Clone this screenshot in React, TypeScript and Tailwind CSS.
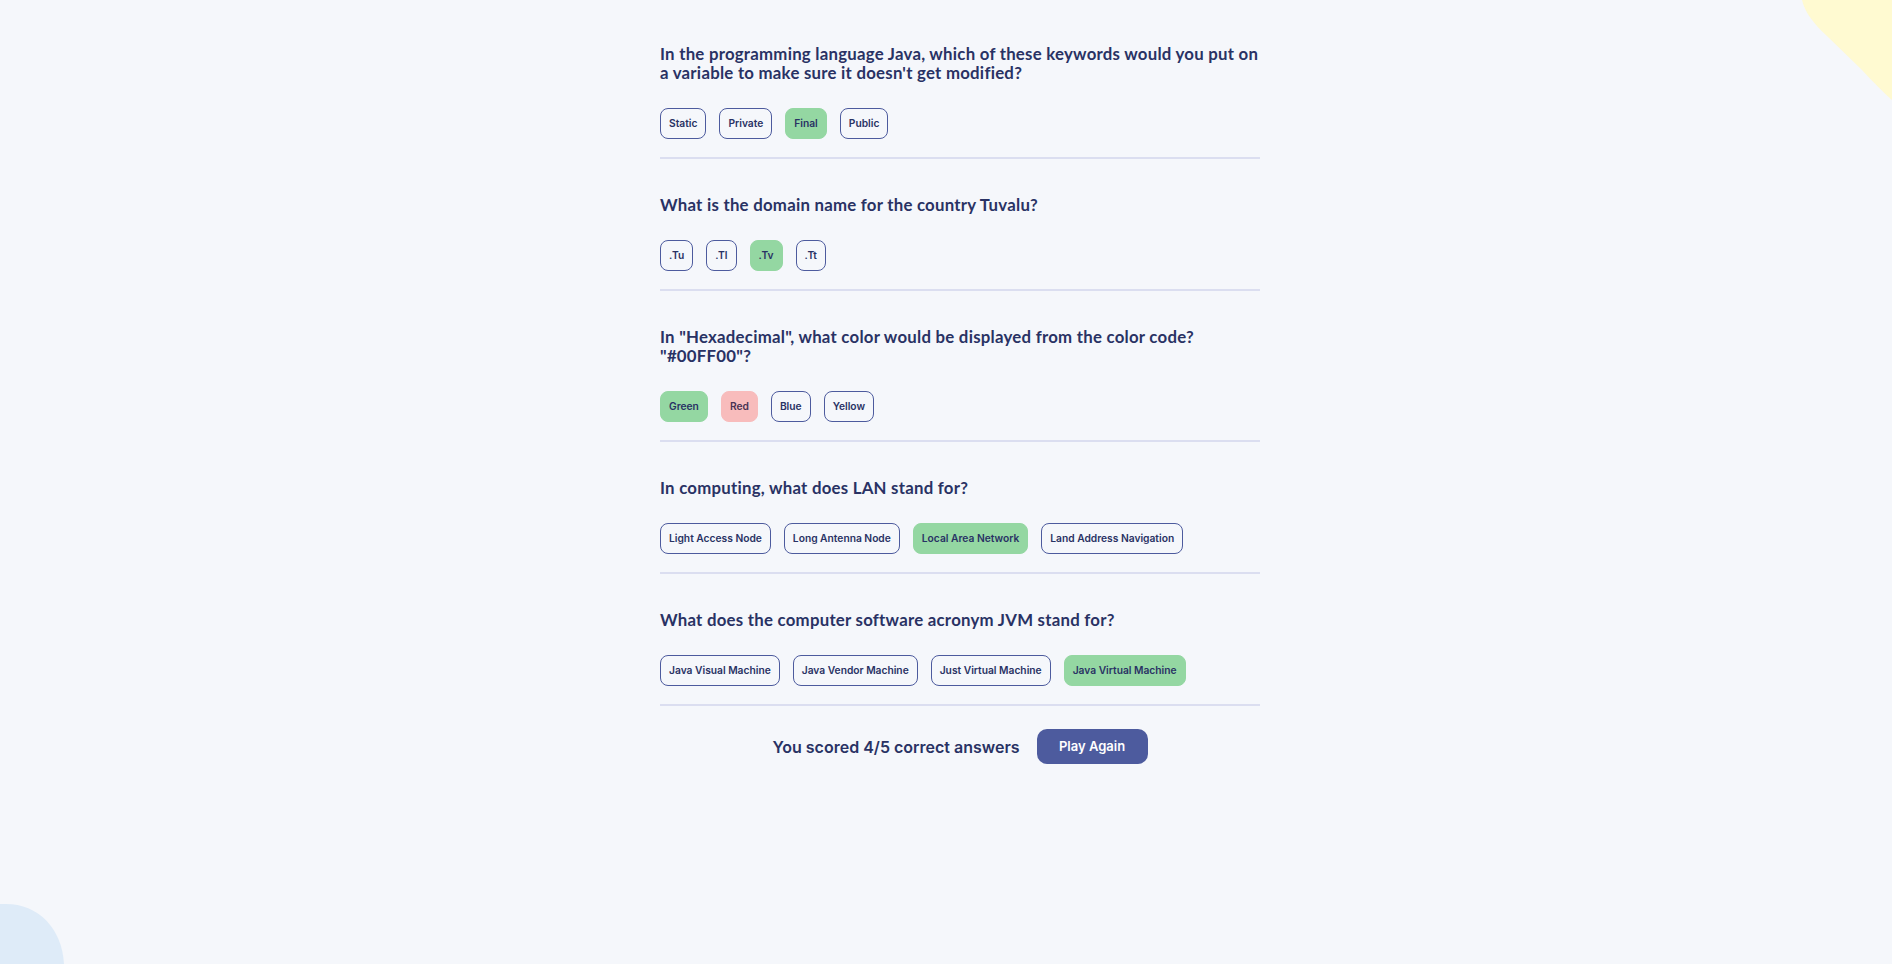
import React from 'react';

type Status = 'idle' | 'correct' | 'wrong';

interface Question {
  question: string;
  answers: { text: string; status: Status }[];
}

const questions: Question[] = [
  {
    question:
      'In the programming language Java, which of these keywords would you put on a variable to make sure it doesn\'t get modified?',
    answers: [
      { text: 'Static', status: 'idle' },
      { text: 'Private', status: 'idle' },
      { text: 'Final', status: 'correct' },
      { text: 'Public', status: 'idle' },
    ],
  },
  {
    question: 'What is the domain name for the country Tuvalu?',
    answers: [
      { text: '.Tu', status: 'idle' },
      { text: '.Tl', status: 'idle' },
      { text: '.Tv', status: 'correct' },
      { text: '.Tt', status: 'idle' },
    ],
  },
  {
    question: 'In "Hexadecimal", what color would be displayed from the color code? "#00FF00"?',
    answers: [
      { text: 'Green', status: 'correct' },
      { text: 'Red', status: 'wrong' },
      { text: 'Blue', status: 'idle' },
      { text: 'Yellow', status: 'idle' },
    ],
  },
  {
    question: 'In computing, what does LAN stand for?',
    answers: [
      { text: 'Light Access Node', status: 'idle' },
      { text: 'Long Antenna Node', status: 'idle' },
      { text: 'Local Area Network', status: 'correct' },
      { text: 'Land Address Navigation', status: 'idle' },
    ],
  },
  {
    question: 'What does the computer software acronym JVM stand for?',
    answers: [
      { text: 'Java Visual Machine', status: 'idle' },
      { text: 'Java Vendor Machine', status: 'idle' },
      { text: 'Just Virtual Machine', status: 'idle' },
      { text: 'Java Virtual Machine', status: 'correct' },
    ],
  },
];

function AnswerButton({ text, status }: { text: string; status: Status }) {
  const look =
    status === 'correct'
      ? 'bg-[#94d7a2] border-[#94d7a2] text-[#293264]'
      : status === 'wrong'
        ? 'bg-[#f8bcbc] border-[#f8bcbc] text-[#4a3354]'
        : 'bg-transparent border-[#4d5b9e] text-[#293264]';
  return (
    <button
      className={`h-[31px] px-2 border rounded-[8px] text-[10.24px] font-semibold leading-none ${look}`}
      style={{ fontFamily: 'Inter, "Liberation Sans", sans-serif' }}
    >
      {text}
    </button>
  );
}

export default function App() {
  return (
    <div className="relative min-h-screen w-full overflow-hidden bg-[#f5f7fb]">
      <svg className="absolute top-0 right-0 w-[90px] h-[100px]" viewBox="0 0 90 100">
        <path d="M0 0 C3 12 10 22 25 36 L60 70 C72 83 82 93 90 100 L90 0 Z" fill="#fffad1" />
      </svg>
      <svg className="absolute bottom-0 left-0 w-[66px] h-[60px]" viewBox="0 0 66 60">
        <path d="M0 0 L6 0 C38 0 62 24 64 60 L0 60 Z" fill="#deebf8" />
      </svg>

      <div className="relative flex justify-center pl-[28px]">
        <div className="w-[600px] pt-[44px]">
          {questions.map((q, i) => (
            <div key={i} className={i === 0 ? '' : 'mt-[36px]'}>
              <h2
                className="text-[16.8px] leading-[19px] font-bold text-[#293264] tracking-[0.25px]"
                style={{ fontFamily: 'Lato, "Noto Sans", sans-serif' }}
              >
                {q.question}
              </h2>
              <div className="mt-[26px] flex gap-[13px]">
                {q.answers.map((a) => (
                  <AnswerButton key={a.text} text={a.text} status={a.status} />
                ))}
              </div>
              <div className="mt-[18px] h-[2px] bg-[#dbdef0]" />
            </div>
          ))}

          <div
            className="mt-[23px] flex items-center justify-center gap-[17px]"
            style={{ fontFamily: 'Inter, "Liberation Sans", sans-serif' }}
          >
            <span className="text-[16px] font-semibold text-[#293264]">You scored 4/5 correct answers</span>
            <button className="w-[111px] h-[35px] rounded-[10px] bg-[#4d5b9e] text-white text-[13px] font-semibold">
              Play Again
            </button>
          </div>
        </div>
      </div>
    </div>
  );
}
